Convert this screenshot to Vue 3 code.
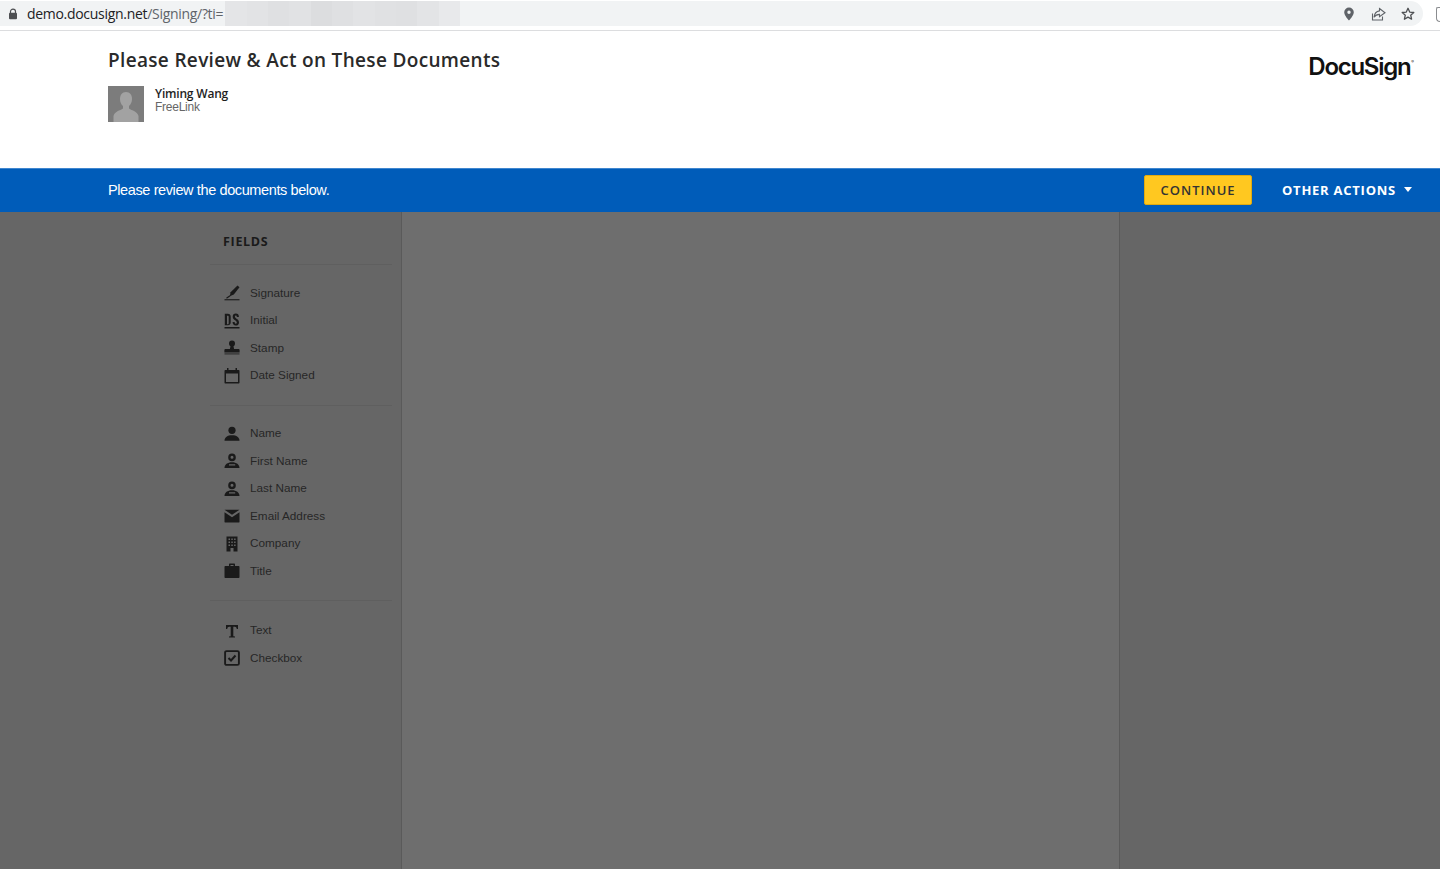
<script setup>
const groups = [
  [
    { label: 'Signature', icon: 'sign' },
    { label: 'Initial', icon: 'ds' },
    { label: 'Stamp', icon: 'stamp' },
    { label: 'Date Signed', icon: 'date' },
  ],
  [
    { label: 'Name', icon: 'name' },
    { label: 'First Name', icon: 'first' },
    { label: 'Last Name', icon: 'first' },
    { label: 'Email Address', icon: 'mail' },
    { label: 'Company', icon: 'company' },
    { label: 'Title', icon: 'title' },
  ],
  [
    { label: 'Text', icon: 'text' },
    { label: 'Checkbox', icon: 'check' },
  ],
]
const blurs = ['#e4e5e7', '#e2e3e5', '#dfe0e2', '#e1e2e4', '#dcdddf', '#dfe0e2', '#e2e3e5', '#e0e1e3', '#dfe0e2', '#e3e4e6', '#e8e9eb']
</script>

<template>
  <div class="page">
    <div class="chrome">
      <div class="omnibox">
        <svg class="lock" width="10" height="12" viewBox="0 0 10 12"><path d="M2.5 5V3.6a2.5 2.5 0 0 1 5 0V5" fill="none" stroke="#4d4f52" stroke-width="1.2"/><rect x="1" y="4.8" width="8" height="6.4" rx="1" fill="#4d4f52"/></svg>
        <span class="url"><span class="host">demo.docusign.net</span>/Signing/?ti=</span>
        <div class="blur"><i v-for="(c, i) in blurs" :key="i" :style="{ background: c }"></i></div>
        <div class="omni-icons">
          <svg width="14" height="16" viewBox="0 0 14 14"><path fill-rule="evenodd" d="M7 .5a4.800 4.800 0 0 0-4.800 4.800C2.200 8.700 7 13.500 7 13.500s4.800-4.800 4.800-8.200A4.800 4.800 0 0 0 7 .5Zm0 6.500a1.700 1.700 0 1 1 0-3.400 1.700 1.700 0 0 1 0 3.400Z" fill="#5f6368"/></svg>
          <svg width="15" height="14" viewBox="0 0 15 14"><path d="M1.500 6.500V13h10V9.500M8.500 1.500l5.500 4.200-5.500 4V7.400C6 7.400 4.300 8.300 3 10.200 3.400 7 5.300 4.400 8.500 3.900Z" fill="none" stroke="#5f6368" stroke-width="1.100"/></svg>
          <svg width="14" height="14" viewBox="0 0 14 14"><path d="M7 1.300l1.700 3.800 4.100.4-3.100 2.700.9 4-3.600-2.100-3.600 2.100.9-4L1.200 5.500l4.100-.4Z" fill="none" stroke="#4d4f52" stroke-width="1.300" stroke-linejoin="round"/></svg>
        </div>
      </div>
      <div class="ext"></div>
    </div>

    <header class="head">
      <div class="head-left">
        <h1>Please Review &amp; Act on These Documents</h1>
        <div class="sender">
          <div class="avatar">
            <svg width="36" height="36" viewBox="0 0 36 36"><rect width="36" height="36" fill="#7c7c7c"/><path d="M18 6c-4 0-6 3-6 7 0 3 1.200 5.500 3 7v2.500c-3 2-8.500 3-9.500 7.500V36h25v-6c-1-4.500-6.500-5.500-9.500-7.500V20c1.800-1.500 3-4 3-7 0-4-2-7-6-7Z" fill="#a2a2a2"/></svg>
          </div>
          <div class="sender-text">
            <div class="sender-name">Yiming Wang</div>
            <div class="sender-org">FreeLink</div>
          </div>
        </div>
      </div>
      <div class="logo">DocuSign<sup>®</sup></div>
    </header>

    <div class="bar">
      <span class="bar-msg">Please review the documents below.</span>
      <div class="bar-actions">
        <button class="continue">CONTINUE</button>
        <button class="other">OTHER ACTIONS<span class="caret"></span></button>
      </div>
    </div>

    <main class="main">
      <aside class="side">
        <div class="fields">
          <div class="fields-title">FIELDS</div>
          <div v-for="(g, gi) in groups" :key="gi" class="group">
            <div v-for="f in g" :key="f.label" class="row">
              <span class="ico">
                <svg width="16" height="16" viewBox="0 0 16 16" fill="#1a1a1a">
                  <template v-if="f.icon === 'sign'">
                    <path d="M13.500 .5 15.500 2.300 9.800 9.500 5.800 11.300 6.600 7.300Z"/>
                    <path d="M6 10.800 2.500 13.300" stroke="#1a1a1a" stroke-width="1.200" fill="none"/>
                    <rect x="0.500" y="14.200" width="15" height="1.100"/>
                  </template>
                  <template v-else-if="f.icon === 'ds'">
                    <path d="M.8 .8h3c1.900 0 2.900 1.100 2.900 2.900v5.600c0 1.800-1 2.900-2.900 2.900h-3Zm2.200 1.900v8.600h.7c.8 0 1-.4 1-1.300v-6c0-.9-.2-1.300-1-1.300ZM11.800 .6c2 0 3.100 1.200 3.100 3.300h-2.100c0-1-.2-1.500-1-1.500-.6 0-.9.400-.9 1.100 0 2.200 4.100 2.400 4.100 6 0 2-1.200 3.100-3.200 3.100s-3.200-1.200-3.200-3.500h2.100c0 1.200.3 1.700 1.100 1.700.7 0 1-.4 1-1.200 0-2.400-4.100-2.500-4.100-5.900 0-1.900 1.200-3.100 3.100-3.100Z"/>
                    <rect x="0.500" y="14" width="15" height="1.500"/>
                  </template>
                  <template v-else-if="f.icon === 'stamp'">
                    <circle cx="8" cy="3.500" r="3"/>
                    <path d="M6.700 5.500h2.600l.8 3.500h4.400c.6 0 1.100.5 1.100 1.100v2.300H.4v-2.300C.4 9.500.9 9 1.500 9h4.400Z"/>
                    <rect x="0.500" y="13.300" width="15" height="1.200" opacity="0.7"/>
                  </template>
                  <template v-else-if="f.icon === 'date'">
                    <path fill-rule="evenodd" d="M3 0h1.500v2h7V0H13v2h1.500c.6 0 1 .4 1 1v11.500c0 .6-.4 1-1 1h-13c-.6 0-1-.4-1-1V3c0-.6.4-1 1-1H3Zm-1 5.500V14h12V5.500Z"/>
                  </template>
                  <template v-else-if="f.icon === 'name'">
                    <circle cx="8" cy="4.300" r="3.600"/>
                    <path d="M.5 14.800c0-3.700 3-5.600 7.500-5.600s7.500 1.900 7.500 5.600Z"/>
                  </template>
                  <template v-else-if="f.icon === 'first'">
                    <path fill-rule="evenodd" d="M8 .6a3.800 3.800 0 1 1 0 7.600A3.800 3.800 0 0 1 8 .6Zm0 2.200a1.500 1.500 0 1 0 0 3 1.500 1.500 0 0 0 0-3Z"/>
                    <path fill-rule="evenodd" d="M.5 15c0-3.600 3-5.800 7.500-5.800s7.500 2.200 7.500 5.800Zm4.500-2.500h6.200v-1.300H5Z"/>
                  </template>
                  <template v-else-if="f.icon === 'mail'">
                    <path d="M.5 1.800h15L8 6.800Z"/>
                    <path d="M.5 4.300 8 9.300l7.500-5v9.700c0 .3-.2.500-.5.500H1c-.3 0-.5-.2-.5-.5Z"/>
                  </template>
                  <template v-else-if="f.icon === 'company'">
                    <path fill-rule="evenodd" d="M2.500 .5h11v15h-4v-3.500h-3v3.500h-4Zm2 2v1.500h1.500V2.500Zm2.800 0v1.500h1.500V2.500Zm2.800 0v1.500h1.500V2.500Zm-5.600 3v1.500h1.500V5.500Zm2.800 0v1.500h1.500V5.500Zm2.800 0v1.500h1.500V5.500Zm-5.600 3v1.500h1.500V8.500Zm2.800 0v1.500h1.500V8.500Zm2.800 0v1.500h1.500V8.500Z"/>
                  </template>
                  <template v-else-if="f.icon === 'title'">
                    <path fill-rule="evenodd" d="M5 3V1.500c0-.6.400-1 1-1h4c.6 0 1 .4 1 1V3h3.500c.6 0 1 .4 1 1v10c0 .6-.4 1-1 1h-13c-.6 0-1-.4-1-1V4c0-.6.4-1 1-1Zm1.500 0h3V2h-3Z"/>
                  </template>
                  <template v-else-if="f.icon === 'text'">
                    <path d="M2 2h12v4h-1.200c-.3-1.600-.8-2.300-2-2.300H9.300v9.500l1.700.4v1H5v-1l1.700-.4V3.700H5.200c-1.200 0-1.700.7-2 2.300H2Z"/>
                  </template>
                  <template v-else-if="f.icon === 'check'">
                    <rect x="1.100" y="1.100" width="13.800" height="13.800" rx="1.500" fill="none" stroke="#1a1a1a" stroke-width="1.900"/>
                    <path d="M4.500 8 7 10.500 11.500 5.500" fill="none" stroke="#1a1a1a" stroke-width="2"/>
                  </template>
                </svg>
              </span>
              <span class="label">{{ f.label }}</span>
            </div>
          </div>
        </div>
      </aside>
      <section class="doc"></section>
      <aside class="right"></aside>
    </main>
  </div>
</template>

<style scoped>
.page { width: 1440px; height: 869px; overflow: hidden; display: flex; flex-direction: column; background: #fff; font-family: "Liberation Sans", Arial, sans-serif; }
.chrome { height: 30px; flex: none; display: flex; border-bottom: 1px solid #dcdddf; background: #fff; box-sizing: content-box; }
.omnibox { width: 1424px; height: 25px; margin-top: 1px; background: #f1f3f4; border-radius: 0 13px 13px 0; display: flex; align-items: center; padding-left: 8px; box-sizing: border-box; }
.lock { flex: none; }
.url { margin-left: 9px; font-family: "Open Sans", "Noto Sans", sans-serif; font-size: 14px; letter-spacing: -0.3px; color: #60646a; white-space: nowrap; }
.host { color: #202124; }
.blur { display: flex; height: 25px; margin-left: 2px; width: 235px; }
.blur i { flex: 1; }
.omni-icons { margin-left: auto; display: flex; align-items: center; gap: 15px; padding-right: 8px; }
.ext { width: 3px; height: 13px; margin: 7px 0 0 13px; border: 1px solid #8a8c8f; border-right: 0; border-radius: 2px 0 0 4px; }

.head { height: 137px; flex: none; display: flex; justify-content: space-between; padding: 0 26px 0 108px; box-sizing: border-box; }
h1 { margin: 17px 0 0; font-family: "Open Sans", "Noto Sans", sans-serif; font-weight: 600; font-size: 19px; line-height: 24px; letter-spacing: 0.33px; color: #2a2a2a; white-space: nowrap; }
.sender { display: flex; margin-top: 14px; }
.avatar { width: 36px; height: 36px; overflow: hidden; }
.avatar svg { display: block; }
.sender-text { margin-left: 11px; padding-top: 1px; }
.sender-name { font-family: "Open Sans", sans-serif; font-weight: 600; font-size: 12px; line-height: 14px; letter-spacing: -0.2px; color: #1e1e1e; }
.sender-org { margin-top: -1px; font-family: "Liberation Sans", sans-serif; font-size: 12px; line-height: 14px; letter-spacing: -0.25px; color: #666; }
.logo { margin-top: 20px; font-family: "Inter", sans-serif; font-weight: 600; font-size: 24px; line-height: 32px; letter-spacing: -1.28px; color: #111; white-space: nowrap; }
.logo sup { font-size: 4px; font-weight: 400; vertical-align: 12px; letter-spacing: 0; margin-left: 1px; line-height: 0; }

.bar { height: 44px; flex: none; background: #005cb9; border-top: 1px solid #3f86cf; box-sizing: border-box; padding: 0 28px 2px 108px; display: flex; align-items: center; justify-content: space-between; }
.bar-msg { font-size: 14.500px; letter-spacing: -0.39px; color: #fff; }
.bar-actions { display: flex; align-items: center; }
.continue { width: 108px; height: 30px; margin-top: 1px; border: 1px solid #e0aa10; border-radius: 2px; background: #ffc820; font-family: "Open Sans", sans-serif; font-weight: 600; font-size: 13px; letter-spacing: 1px; color: #333; padding: 0; }
.other { display: flex; align-items: center; margin-left: 30px; padding: 0; border: 0; background: none; font-family: "Open Sans", sans-serif; font-weight: 700; font-size: 13px; letter-spacing: 0.75px; color: #fff; }
.caret { margin-left: 8px; width: 0; height: 0; border-left: 4px solid transparent; border-right: 4px solid transparent; border-top: 5px solid #fff; }

.main { flex: 1; display: flex; background: #666; min-height: 0; }
.side { width: 402px; flex: none; box-sizing: border-box; border-right: 1px solid #5a5a5a; padding-left: 210px; }
.fields { width: 182px; }
.fields-title { height: 52px; box-sizing: border-box; padding: 22px 0 0 13px; font-family: "Open Sans", sans-serif; font-weight: 700; font-size: 12.500px; line-height: 16px; letter-spacing: 0.7px; color: #1a1a1a; }
.group { border-top: 1px solid #5f5f5f; padding: 13.500px 0 16.200px; }
.group:last-child { padding-top: 14.500px; }
.row { height: 27.500px; display: flex; align-items: center; padding-left: 14px; }
.ico { width: 16px; height: 16px; display: block; margin-top: 2px; }
.ico svg { display: block; }
.label { margin-left: 10px; font-size: 11.750px; color: #262626; white-space: nowrap; }
.doc { flex: none; width: 717px; background: #6e6e6e; }
.right { flex: 1; border-left: 1px solid #5a5a5a; }
</style>
